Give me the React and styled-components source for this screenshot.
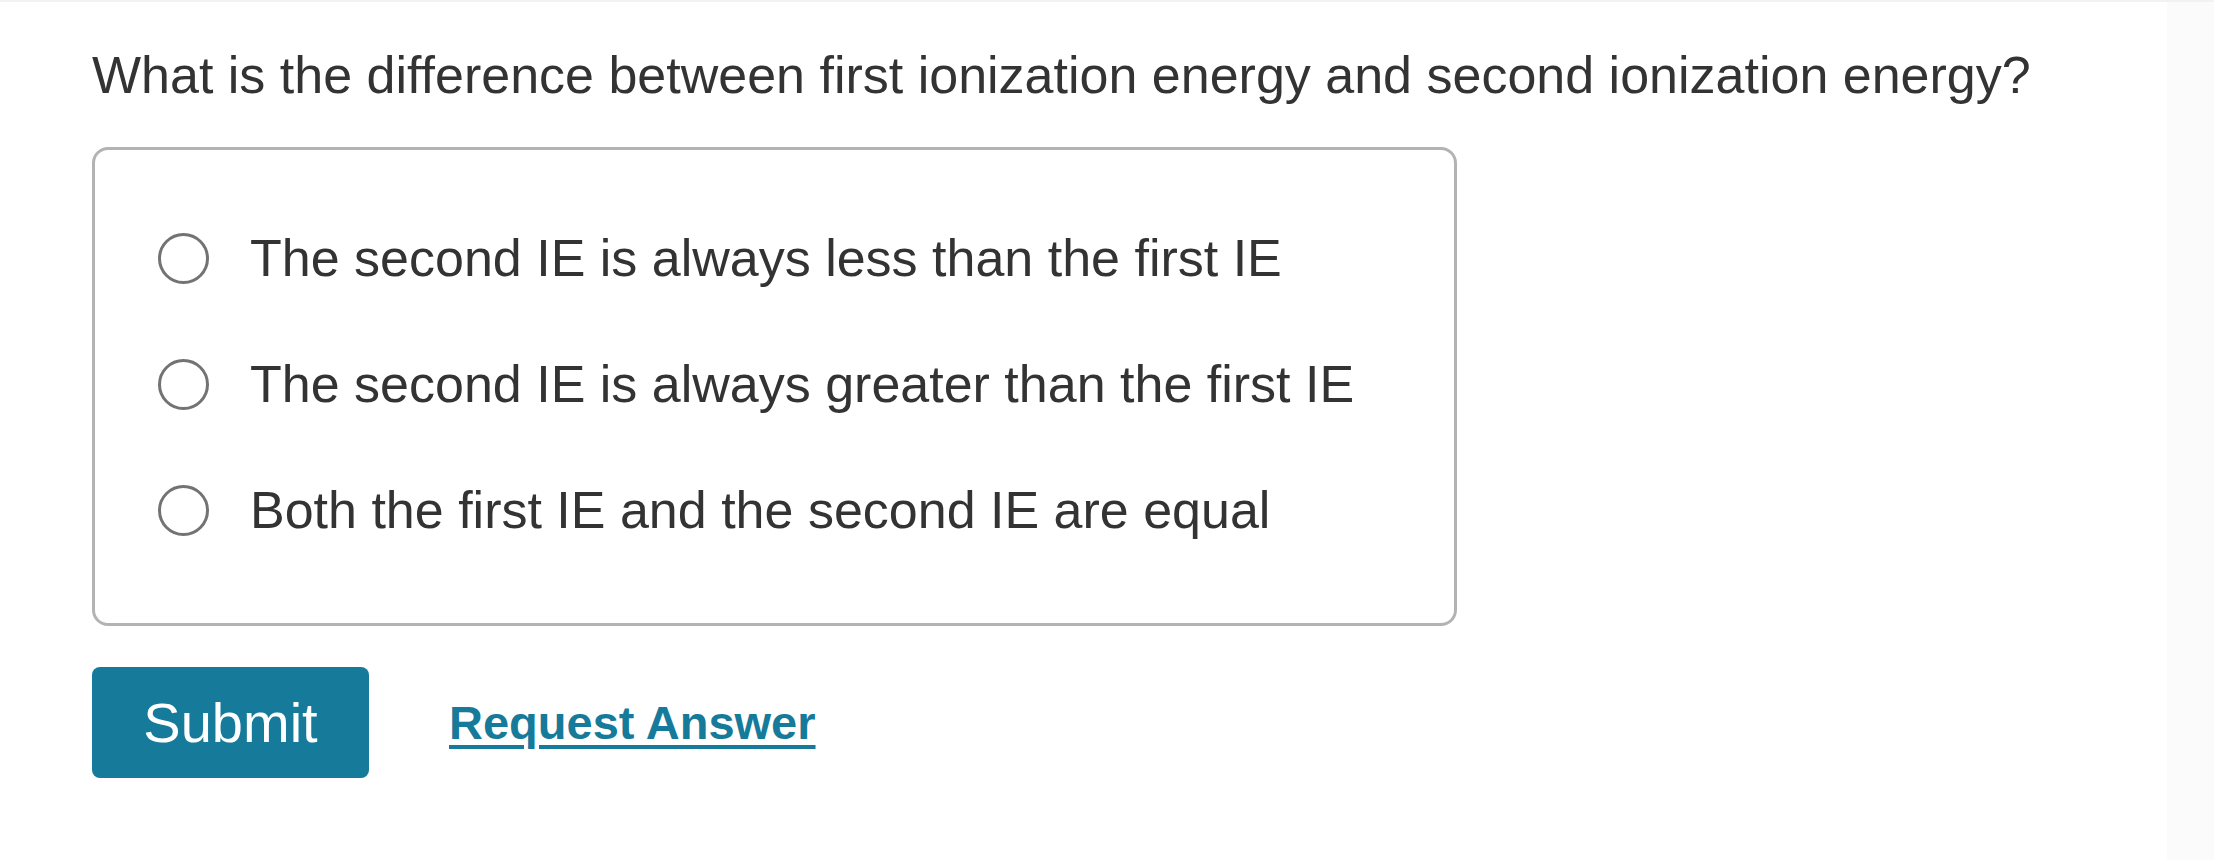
import React from "react";
import styled, { createGlobalStyle } from "styled-components";

const Global = createGlobalStyle`
  html, body { margin: 0; padding: 0; background: #ffffff; }
  body { font-family: "Liberation Sans", Arial, Helvetica, sans-serif; color: #333333; }
`;

const Page = styled.div`
  display: flex;
  width: 2214px;
  height: 860px;
  box-sizing: border-box;
  border-top: 2px solid #f2f2f2;
`;

const Main = styled.div`
  flex: 1;
  display: flex;
  flex-direction: column;
  align-items: flex-start;
  padding: 43px 0 0 92px;
`;

const Gutter = styled.div`
  width: 47px;
  background: #fbfbfb;
`;

const Question = styled.h2`
  margin: 0;
  font-size: 52px;
  line-height: 60px;
  font-weight: 400;
  color: #333333;
`;

const Choices = styled.div`
  margin-top: 42px;
  width: 1365px;
  box-sizing: border-box;
  border: 3px solid #b3b3b3;
  border-radius: 16px;
  padding: 45px 0 50px 63px;
  display: flex;
  flex-direction: column;
`;

const Choice = styled.label`
  display: flex;
  align-items: center;
  height: 126px;
  gap: 41px;
  font-size: 52px;
  color: #333333;
  cursor: pointer;
`;

const Radio = styled.span`
  width: 51px;
  height: 51px;
  box-sizing: border-box;
  border: 3px solid #737373;
  border-radius: 50%;
  flex: none;
`;

const Actions = styled.div`
  margin-top: 41px;
  display: flex;
  align-items: center;
  gap: 80px;
`;

const SubmitButton = styled.button`
  width: 277px;
  height: 111px;
  padding: 0;
  border: none;
  border-radius: 8px;
  background: #167a9a;
  color: #ffffff;
  font-family: "Liberation Sans", Arial, sans-serif;
  font-size: 56px;
  cursor: pointer;
`;

const RequestLink = styled.a`
  font-size: 47px;
  font-weight: 700;
  color: #167a9a;
  text-decoration: underline;
  text-decoration-thickness: 4px;
  text-underline-offset: 6px;
`;

const options = [
  "The second IE is always less than the first IE",
  "The second IE is always greater than the first IE",
  "Both the first IE and the second IE are equal",
];

export default function App() {
  return (
    <>
      <Global />
      <Page>
        <Main>
          <Question>What is the difference between first ionization energy and second ionization energy?</Question>
          <Choices>
            {options.map((o) => (
              <Choice key={o}>
                <Radio />
                <span>{o}</span>
              </Choice>
            ))}
          </Choices>
          <Actions>
            <SubmitButton>Submit</SubmitButton>
            <RequestLink href="#">Request Answer</RequestLink>
          </Actions>
        </Main>
        <Gutter />
      </Page>
    </>
  );
}
